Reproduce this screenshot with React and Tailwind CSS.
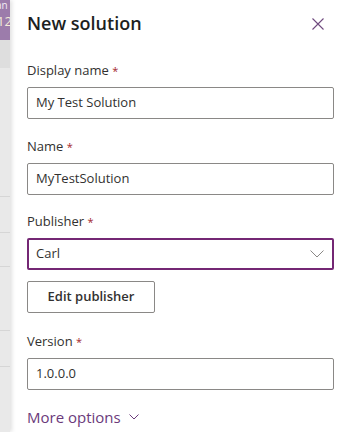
import React from "react";

const font = { fontFamily: '"Open Sans", "Noto Sans", sans-serif' };

function Label({ children }) {
  return (
    <div className="h-[20px] text-[13px] leading-[20px] text-[#323130]">
      {children} <span className="text-[11px] text-[#a4262c]">*</span>
    </div>
  );
}

function Input({ value }) {
  return (
    <div className="mt-[7px] flex h-[32px] items-center rounded-[2px] border border-[#8a8886] px-[8px] text-[13px] text-[#323130]">
      {value}
    </div>
  );
}

export default function App() {
  return (
    <div className="flex h-[432px] w-[345px] overflow-hidden bg-white" style={font}>
      <div className="relative flex w-[10px] shrink-0 flex-col bg-[#e9e9e9] shadow-[2px_0_4px_rgba(0,0,0,0.12)]">
        <div className="flex h-[40px] flex-col overflow-hidden bg-[#9c7cab] text-[#f3ecf5]">
          <div className="-ml-[4px] h-[11px] overflow-hidden text-[10px] leading-[11px]">an</div>
          <div className="-ml-[3px] mt-[3px] h-[15px] overflow-hidden text-[13px] leading-[15px] text-[#f4ecd8]">12</div>
        </div>
        <div className="h-[28px] bg-[#dedede]" />
        <div className="h-[129px] border-b border-[#d6d6d6]" />
        <div className="h-[36px] border-b border-[#d6d6d6]" />
        <div className="h-[34px] border-b border-[#d6d6d6]" />
        <div className="h-[64px] border-b border-[#d6d6d6]" />
        <div className="h-[36px] border-b border-[#d6d6d6]" />
      </div>
      <div className="flex-1 pl-[17px] pr-[11px]">
        <div className="flex h-[48px] items-start justify-between pt-[11px]">
          <div className="text-[18px] font-semibold leading-[24px] text-[#201f1e]">New solution</div>
          <svg width="14" height="14" viewBox="0 0 14 14" className="mr-[9px] mt-[6px]">
            <path d="M1.5 1.5 L12.5 12.5 M12.5 1.5 L1.5 12.5" stroke="#6f4a7e" strokeWidth="1.1" fill="none" />
          </svg>
        </div>
        <div className="mt-[12px]">
          <Label>Display name</Label>
          <Input value="My Test Solution" />
        </div>
        <div className="mt-[17px]">
          <Label>Name</Label>
          <Input value="MyTestSolution" />
        </div>
        <div className="mt-[16px]">
          <Label>Publisher</Label>
          <div className="mt-[7px] flex h-[32px] items-center justify-between rounded-[2px] border-2 border-[#742774] px-[7px] text-[13px] text-[#323130]">
            <span>Carl</span>
            <svg width="14" height="8" viewBox="0 0 14 8" className="mr-[1px]">
              <path d="M0.5 0.5 L7 7 L13.5 0.5" stroke="#8a8886" strokeWidth="1" fill="none" />
            </svg>
          </div>
        </div>
        <div className="mt-[11px] flex h-[32px] w-[128px] items-center justify-center rounded-[2px] border border-[#8a8886] text-[13px] font-semibold text-[#323130]">
          Edit publisher
        </div>
        <div className="mt-[18px]">
          <Label>Version</Label>
          <Input value="1.0.0.0" />
        </div>
        <div className="mt-[16px] flex items-center gap-[8px] text-[15px] leading-[22px] text-[#6b3a7b]">
          <span>More options</span>
          <svg width="10" height="6" viewBox="0 0 10 6">
            <path d="M0.5 0.5 L5 5 L9.5 0.5" stroke="#6b3a7b" strokeWidth="1" fill="none" />
          </svg>
        </div>
      </div>
    </div>
  );
}
